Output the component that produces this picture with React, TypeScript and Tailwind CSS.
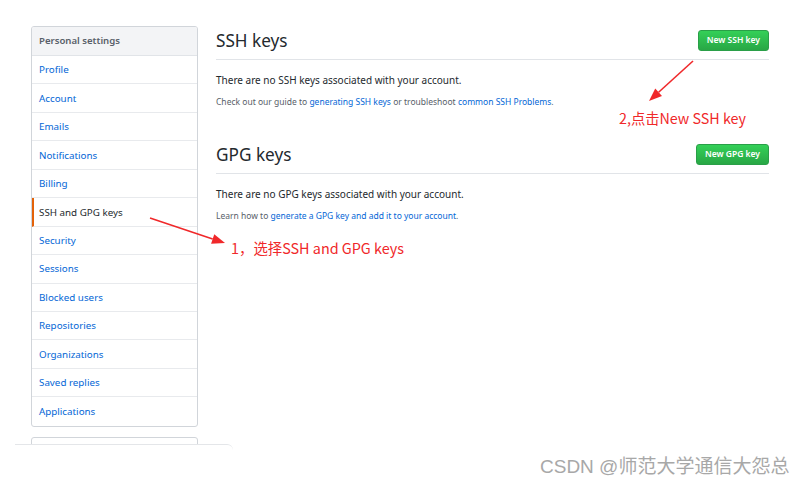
const NAV = [
  "Profile",
  "Account",
  "Emails",
  "Notifications",
  "Billing",
  "SSH and GPG keys",
  "Security",
  "Sessions",
  "Blocked users",
  "Repositories",
  "Organizations",
  "Saved replies",
  "Applications",
];

const FONT = { fontFamily: '"Noto Sans", "Open Sans", "Noto Sans CJK SC", sans-serif' };
const CJK = { fontFamily: '"Noto Sans CJK SC", "Noto Sans", sans-serif' };

function Arrow({ x1, y1, x2, y2 }: { x1: number; y1: number; x2: number; y2: number }) {
  const a = Math.atan2(y2 - y1, x2 - x1);
  const L = 13;
  const W = 5;
  const bx = x2 - L * Math.cos(a);
  const by = y2 - L * Math.sin(a);
  const px = -Math.sin(a) * W;
  const py = Math.cos(a) * W;
  return (
    <g>
      <line x1={x1} y1={y1} x2={bx} y2={by} stroke="#f0282a" strokeWidth={1.6} />
      <polygon points={`${x2},${y2} ${bx + px},${by + py} ${bx - px},${by - py}`} fill="#f0282a" />
    </g>
  );
}

function KeySection({
  title,
  button,
  empty,
  help,
}: {
  title: string;
  button: string;
  empty: string;
  help: React.ReactNode;
}) {
  return (
    <section>
      <div className="flex h-[34px] items-center justify-between border-b border-[#e1e4e8] pb-[4px]">
        <h2 className="text-[17.2px] font-normal leading-none text-[#24292e]">{title}</h2>
        <button className="h-[21px] rounded-[3px] border border-[#2a9f48] bg-gradient-to-b from-[#34d058] to-[#28a745] px-[8px] text-[8.5px] font-semibold text-white">
          {button}
        </button>
      </div>
      <p className="mt-[13px] text-[10px] leading-[14px] text-[#24292e]">{empty}</p>
      <p className="mt-[9px] text-[8.5px] leading-[12px] text-[#586069]">{help}</p>
    </section>
  );
}

export default function App() {
  return (
    <div className="relative h-[486px] w-[807px] overflow-hidden bg-white" style={FONT}>
      <div className="flex gap-[18px] pl-[31px] pt-[26px]">
        {/* sidebar */}
        <div className="flex w-[167px] flex-col gap-[10px]">
          <nav className="overflow-hidden rounded-[3px] border border-[#d1d5da]">
            <div className="flex h-[29px] items-center border-b border-[#e1e4e8] bg-[#f3f4f6] px-[7px] pt-[1px] text-[9.6px] font-semibold text-[#586069]">
              Personal settings
            </div>
            {NAV.map((n, i) => {
              const active = n === "SSH and GPG keys";
              return (
                <div
                  key={n}
                  className={
                    "flex h-[28.45px] items-center pt-[2px] text-[9.8px] " +
                    (i < NAV.length - 1 ? "border-b border-[#e8eaed] " : "") +
                    (active
                      ? "border-l-2 border-l-[#e36209] pl-[5px] text-[#24292e]"
                      : "pl-[7px] text-[#0366d6]")
                  }
                >
                  {n}
                </div>
              );
            })}
          </nav>
          <div className="h-[30px] rounded-[3px] border border-[#d1d5da]" />
        </div>

        {/* main */}
        <div className="flex w-[553px] flex-col gap-[32px]">
          <KeySection
            title="SSH keys"
            button="New SSH key"
            empty="There are no SSH keys associated with your account."
            help={
              <>
                Check out our guide to <span className="text-[#0366d6]">generating SSH keys</span> or troubleshoot{" "}
                <span className="text-[#0366d6]">common SSH Problems</span>.
              </>
            }
          />
          <KeySection
            title="GPG keys"
            button="New GPG key"
            empty="There are no GPG keys associated with your account."
            help={
              <>
                Learn how to <span className="text-[#0366d6]">generate a GPG key and add it to your account</span>.
              </>
            }
          />
        </div>
      </div>

      {/* cut-off bottom panel */}
      <div className="absolute left-[15px] top-[444px] h-[60px] w-[218px] rounded-tr-[6px] border-t border-[#e4e6e9] bg-white" />

      {/* annotations */}
      <svg className="absolute left-0 top-0" width={807} height={486}>
        <Arrow x1={150} y1={218} x2={225} y2={243} />
        <Arrow x1={693} y1={61} x2={649} y2={101} />
      </svg>
      <div className="absolute left-[619px] top-[108px] text-[14.3px] leading-[20px] text-[#f0282a]" style={CJK}>
        2,点击New SSH key
      </div>
      <div className="absolute left-[231px] top-[238px] text-[14.4px] leading-[20px] text-[#f0282a]" style={CJK}>
        1，选择SSH and GPG keys
      </div>
      <div
        className="absolute left-[540px] top-[455px] text-[19px] leading-[24px] text-[#a8a8a8]"
        style={{ fontFamily: '"Liberation Sans", "Noto Sans CJK SC", sans-serif' }}
      >
        CSDN @师范大学通信大怨总
      </div>
    </div>
  );
}
